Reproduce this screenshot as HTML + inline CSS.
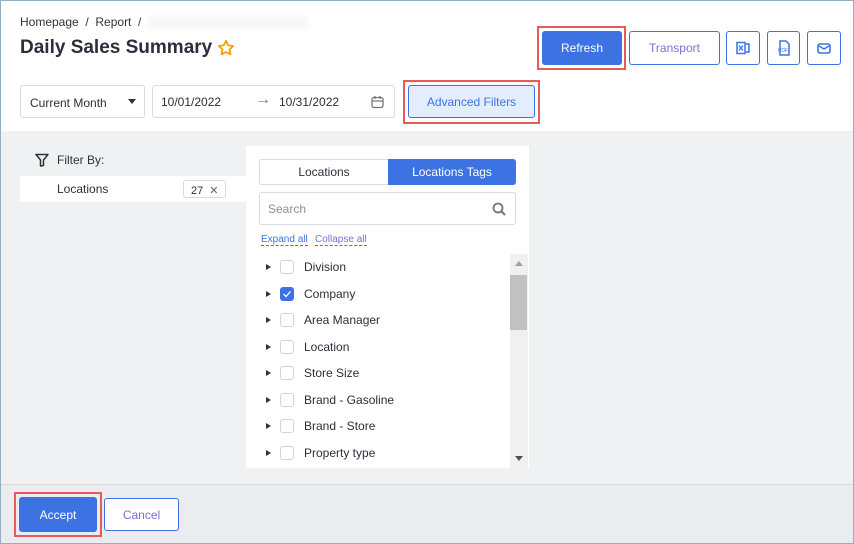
<!DOCTYPE html>
<html><head><style>
*{box-sizing:border-box;margin:0;padding:0}
body{width:854px;height:544px;font-family:"Liberation Sans",sans-serif;background:#fff;position:relative;overflow:hidden;color:#2a2f3a}
.frame{position:absolute;left:0;top:0;width:854px;height:544px;border:1px solid #8fb0c6;pointer-events:none;z-index:10}
.abs{position:absolute}
.btn{position:absolute;border:1px solid #3d72e3;border-radius:3px;background:#fff;color:#3d72e3;font-size:12px;display:flex;align-items:center;justify-content:center}
.red{position:absolute;border:2px solid #e85a5a}
.row{position:absolute;left:264px;height:20px;display:flex;align-items:center;font-size:12px;color:#2a2f3a}
.tri{width:0;height:0;border-left:5px solid #333;border-top:3.5px solid transparent;border-bottom:3.5px solid transparent;margin-left:2px;margin-right:9px}
.cb{width:14px;height:14px;border:1px solid #cfd3da;border-radius:3px;margin-right:10px;background:#fff}
.cb.on{background:#3d72e3;border-color:#3d72e3}
</style></head><body>
<div class="frame"></div>
<div class="abs" style="left:20px;top:15px;font-size:12px;color:#333">Homepage &nbsp;/&nbsp; Report &nbsp;/</div>
<div class="abs" style="left:148px;top:16px;width:160px;height:14px;background:#f7f7f7;filter:blur(2px)"></div>
<div class="abs" style="left:20px;top:37px;font-size:19px;font-weight:bold;color:#2a2f3a">Daily Sales Summary</div>
<svg class="abs" style="left:217px;top:39px" width="18" height="18" viewBox="0 0 18 18"><path d="M9 1.8l2.2 4.6 5 .6-3.7 3.4 1 5L9 13l-4.5 2.4 1-5L1.8 7l5-.6z" fill="none" stroke="#f5a200" stroke-width="1.8" stroke-linejoin="round"/></svg>

<div class="red" style="left:537px;top:26px;width:89px;height:44px"></div>
<div class="btn" style="left:542px;top:31px;width:80px;height:34px;background:#3d72e3;color:#fff">Refresh</div>
<div class="btn" style="left:629px;top:31px;width:91px;height:34px;color:#7a6fd6">Transport</div>
<div class="btn" style="left:726px;top:31px;width:34px;height:34px"><svg width="14" height="14" viewBox="0 0 14 14"><rect x="1" y="1.5" width="8" height="11" fill="none" stroke="#3d72e3" stroke-width="1.5"/><path d="M3 4.5l4 5M7 4.5l-4 5" stroke="#3d72e3" stroke-width="1.4"/><path d="M10 3h3v8h-3" fill="none" stroke="#3d72e3" stroke-width="1.5"/></svg></div>
<div class="btn" style="left:767px;top:31px;width:33px;height:34px"><svg width="14" height="16" viewBox="0 0 14 16"><path d="M3 1h6l3 3v11H3z" fill="none" stroke="#3d72e3" stroke-width="1.5"/><text x="1" y="12" font-size="5" fill="#3d72e3" font-family="Liberation Sans">PDF</text></svg></div>
<div class="btn" style="left:807px;top:31px;width:34px;height:34px"><svg width="14" height="11" viewBox="0 0 14 11"><rect x="1" y="1" width="12" height="9" rx="2" fill="none" stroke="#3d72e3" stroke-width="1.6"/><path d="M2 3l5 3 5-3" fill="none" stroke="#3d72e3" stroke-width="1.6"/></svg></div>

<div class="abs" style="left:20px;top:85px;width:125px;height:33px;border:1px solid #d8dbe0;border-radius:3px;font-size:12px;padding:10px 0 0 9px">Current Month<span style="position:absolute;right:8px;top:13px;border-top:5px solid #333;border-left:4px solid transparent;border-right:4px solid transparent"></span></div>
<div class="abs" style="left:152px;top:85px;width:243px;height:33px;border:1px solid #d8dbe0;border-radius:3px;font-size:12px">
<span class="abs" style="left:8px;top:9px">10/01/2022</span>
<span class="abs" style="left:102px;top:5px;font-size:16px;color:#777">→</span>
<span class="abs" style="left:126px;top:9px">10/31/2022</span>
<svg class="abs" style="left:218px;top:9px" width="13" height="14" viewBox="0 0 13 14"><rect x="1" y="2.5" width="11" height="10" rx="2" fill="none" stroke="#777" stroke-width="1.3"/><path d="M1 6h11M4 1v3M9 1v3" stroke="#777" stroke-width="1.3"/></svg>
</div>
<div class="red" style="left:403px;top:80px;width:137px;height:44px"></div>
<div class="btn" style="left:408px;top:85px;width:127px;height:33px;background:#e3edfd;color:#3d72e3">Advanced Filters</div>

<div class="abs" style="left:1px;top:131px;width:852px;height:354px;background:#f0f1f3"></div>
<svg class="abs" style="left:35px;top:153px" width="14" height="14" viewBox="0 0 14 14"><path d="M1 1.5h12L8.5 7v5.5L5.5 13V7z" fill="none" stroke="#333" stroke-width="1.5" stroke-linejoin="round"/></svg>
<div class="abs" style="left:57px;top:153px;font-size:12px;color:#333">Filter By:</div>
<div class="abs" style="left:20px;top:176px;width:226px;height:26px;background:#fff"></div>
<div class="abs" style="left:57px;top:182px;font-size:12px">Locations</div>
<div class="abs" style="left:183px;top:180px;width:43px;height:18px;border:1px solid #d8dbe0;border-radius:3px;font-size:11px;padding:3px 0 0 7px;background:#fff">27 <span style="color:#666;margin-left:3px">✕</span></div>

<div class="abs" style="left:246px;top:146px;width:283px;height:322px;background:#fff"></div>
<div class="abs" style="left:259px;top:159px;width:130px;height:26px;border:1px solid #d8dbe0;border-radius:3px 0 0 3px;font-size:12px;text-align:center;line-height:24px">Locations</div>
<div class="abs" style="left:388px;top:159px;width:128px;height:26px;background:#3d72e3;color:#fff;border-radius:0 3px 3px 0;font-size:12px;text-align:center;line-height:26px">Locations Tags</div>
<div class="abs" style="left:259px;top:192px;width:257px;height:33px;border:1px solid #d8dbe0;border-radius:3px;font-size:12px;color:#8a8f99;padding:9px 0 0 8px">Search
<svg class="abs" style="right:9px;top:9px" width="14" height="14" viewBox="0 0 14 14"><circle cx="6" cy="6" r="4.5" fill="none" stroke="#777" stroke-width="1.8"/><path d="M9.5 9.5L13 13" stroke="#777" stroke-width="2"/></svg></div>
<div class="abs" style="left:261px;top:234px;font-size:10px;color:#3d72e3;border-bottom:1px dashed #3d72e3">Expand all</div>
<div class="abs" style="left:315px;top:234px;font-size:10px;color:#7a6fd6;border-bottom:1px dashed #3d72e3">Collapse all</div>

<div class="abs" style="left:510px;top:254px;width:18px;height:214px;background:#f0f0f0"></div>
<div class="abs" style="left:510px;top:275px;width:17px;height:55px;background:#c1c1c1"></div>
<div class="abs" style="left:515px;top:261px;border-bottom:5px solid #a0a0a0;border-left:4px solid transparent;border-right:4px solid transparent"></div>
<div class="abs" style="left:515px;top:456px;border-top:5px solid #505050;border-left:4px solid transparent;border-right:4px solid transparent"></div>

<div class="row" style="top:257px"><span class="tri"></span><span class="cb"></span>Division</div>
<div class="row" style="top:284px"><span class="tri"></span><span class="cb on"><svg width="12" height="12" viewBox="0 0 12 12"><path d="M2.5 6l2.5 2.5 4.5-5" fill="none" stroke="#fff" stroke-width="1.3"/></svg></span>Company</div>
<div class="row" style="top:310px"><span class="tri"></span><span class="cb"></span>Area Manager</div>
<div class="row" style="top:337px"><span class="tri"></span><span class="cb"></span>Location</div>
<div class="row" style="top:363px"><span class="tri"></span><span class="cb"></span>Store Size</div>
<div class="row" style="top:390px"><span class="tri"></span><span class="cb"></span>Brand - Gasoline</div>
<div class="row" style="top:416px"><span class="tri"></span><span class="cb"></span>Brand - Store</div>
<div class="row" style="top:443px"><span class="tri"></span><span class="cb"></span>Property type</div>

<div class="abs" style="left:1px;top:484px;width:852px;height:60px;background:#ebecef;border-top:1px solid #d5d8dd"></div>
<div class="red" style="left:14px;top:492px;width:88px;height:45px"></div>
<div class="btn" style="left:19px;top:497px;width:78px;height:35px;background:#3d72e3;color:#fff">Accept</div>
<div class="btn" style="left:104px;top:498px;width:75px;height:33px;color:#7a6fd6">Cancel</div>
</body></html>
